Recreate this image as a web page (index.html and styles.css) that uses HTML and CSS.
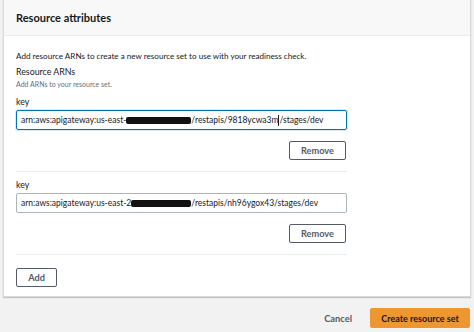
FILE: index.html
```html
<!DOCTYPE html>
<html>
<head>
<meta charset="utf-8">
<link rel="stylesheet" href="styles.css">
</head>
<body>
<div class="page">
  <div class="card">
    <div class="card-header"><h2>Resource attributes</h2></div>
    <div class="card-body">
      <p class="intro">Add resource ARNs to create a new resource set to use with your readiness check.</p>
      <div class="field-label">Resource ARNs</div>
      <div class="field-desc">Add ARNs to your resource set.</div>
      <div class="entry first">
        <div class="key">key</div>
        <div class="input focused"><span>arn:aws:apigateway:us-east-</span><span class="redact r1"></span><span>/restapis/9818ycwa3m</span><span class="caret"></span><span>/stages/dev</span></div>
        <div class="actions"><button class="btn">Remove</button></div>
      </div>
      <div class="entry">
        <div class="key">key</div>
        <div class="input"><span>arn:aws:apigateway:us-east-2</span><span class="redact r2"></span><span>/restapis/nh96ygox43/stages/dev</span></div>
        <div class="actions"><button class="btn">Remove</button></div>
      </div>
      <div class="add-row"><button class="btn">Add</button></div>
    </div>
  </div>
  <div class="footer">
    <button class="link-btn">Cancel</button>
    <button class="primary">Create resource set</button>
  </div>
</div>
</body>
</html>
```
FILE: styles.css
```css
* { box-sizing: border-box; }
html, body { margin: 0; padding: 0; }
body {
  width: 474px;
  height: 332px;
  overflow: hidden;
  background: #f2f2f2;
  font-family: Lato, "Open Sans", sans-serif;
  color: #16191f;
}
.page {
  padding: 0 3px 0 3px;
}
.card {
  background: #fff;
  border: 1px solid #d5dbdb;
  border-top: none;
  box-shadow: 0 1px 1px rgba(0,22,40,0.2);
  height: 297px;
}
.card-header {
  background: #f8f8f8;
  border-bottom: 1px solid #eaeded;
  height: 36px;
  padding: 0 12px;
  display: flex;
  align-items: center;
}
.card-header h2 {
  margin: 0;
  font-size: 11px;
  font-weight: 700;
}
.card-body {
  padding: 12px 12px 0 12px;
}
.intro {
  margin: 0;
  font-size: 8.1px;
  line-height: 16px;
}
.field-label {
  font-size: 8.8px;
  line-height: 14px;
  margin-top: 1px;
}
.field-desc {
  font-size: 7px;
  line-height: 11px;
  color: #687078;
}
.entry {
  width: 331px;
  border-bottom: 1px solid #eaeded;
  padding-bottom: 11px;
  margin-top: 6px;
}
.entry.first { margin-top: 5px; }
.key {
  font-size: 8.8px;
  line-height: 14px;
}
.input {
  margin-top: 1px;
  height: 20px;
  border: 1px solid #aab7b8;
  border-radius: 2px;
  padding: 0 4px;
  font-size: 8.5px;
  white-space: nowrap;
  display: flex;
  align-items: center;
  color: #16191f;
}
.input.focused {
  border-color: #0073bb;
  box-shadow: 0 0 0 1px #d6ebf9;
}
.redact {
  display: inline-block;
  height: 7px;
  background: #111;
  border-radius: 2px;
}
.r1 { width: 65px; }
.r2 { width: 60px; }
.caret {
  display: inline-block;
  width: 1px;
  height: 11px;
  background: #16191f;
}
.actions {
  display: flex;
  justify-content: flex-end;
  margin-top: 11px;
  padding-right: 1px;
}
.btn {
  font-family: inherit;
  background: #fff;
  border: 1px solid #545b64;
  border-radius: 2px;
  color: #545b64;
  font-weight: 700;
  font-size: 9.2px;
  height: 19px;
  padding: 0;
  cursor: pointer;
}
.actions .btn { width: 57px; }
.add-row {
  margin-top: 10px;
}
.add-row .btn { width: 41px; }
.footer {
  display: flex;
  justify-content: flex-end;
  align-items: center;
  gap: 16px;
  padding: 11px 1px 0 0;
}
.link-btn {
  background: none;
  border: none;
  font-family: inherit;
  font-weight: 700;
  font-size: 9.3px;
  color: #545b64;
  padding: 0 2px;
}
.primary {
  font-family: inherit;
  background: #ec972f;
  border: 1px solid #ec972f;
  border-radius: 2px;
  color: #16191f;
  font-weight: 700;
  font-size: 9px;
  height: 20px;
  width: 100px;
  padding: 0;
}
```
